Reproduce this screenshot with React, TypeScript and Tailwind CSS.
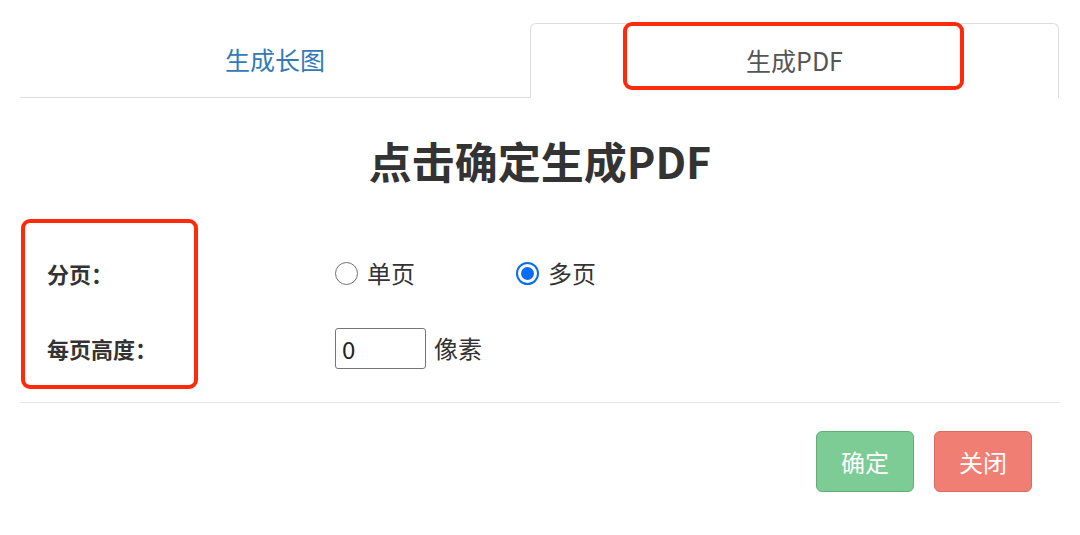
import React from 'react';

const font = "font-['Noto_Sans_CJK_SC','Noto_Sans',sans-serif]";

const Radio = ({ checked, label }: { checked?: boolean; label: string }) => (
  <label className="flex items-center gap-[9px] text-[24px] text-[#333]">
    {checked ? (
      <span className="w-[23px] h-[23px] rounded-full border-[2px] border-[#0a6cf5] flex items-center justify-center">
        <span className="w-[13px] h-[13px] rounded-full bg-[#0a6cf5]" />
      </span>
    ) : (
      <span className="w-[23px] h-[23px] rounded-full border-[1.5px] border-[#6f6f6f] bg-white" />
    )}
    {label}
  </label>
);

const App = () => {
  return (
    <div className={`relative w-[1080px] h-[535px] bg-white overflow-hidden ${font}`}>
      {/* tabs */}
      <div className="mx-5 mt-[23px] flex h-[75px]">
        <div className="w-[510px] border-b border-[#ddd] flex items-center justify-center text-[25px] text-[#337ab7]">
          生成长图
        </div>
        <div className="flex-1 mr-[1px] border border-b-0 border-[#ddd] rounded-t-[6px] flex items-center justify-center text-[25px] text-[#555]">
          生成PDF
        </div>
      </div>

      <h1 className="mt-[32px] text-center text-[43px] leading-[60px] font-semibold text-[#333]">点击确定生成PDF</h1>

      {/* form */}
      <div className="mt-[60px] pl-[47px] flex flex-col gap-[29px]">
        <div className="flex items-center h-[46px]">
          <div className="w-[288px] text-[22px] font-bold text-[#333]">分页：</div>
          <div className="flex items-center gap-[36px]">
            <div className="w-[145px]">
              <Radio label="单页" />
            </div>
            <Radio checked label="多页" />
          </div>
        </div>
        <div className="flex items-center h-[46px]">
          <div className="w-[288px] text-[22px] font-bold text-[#333]">每页高度：</div>
          <div className="flex items-center gap-[8px]">
            <input
              type="text"
              defaultValue="0"
              className="w-[91px] h-[41px] border border-[#767676] rounded-[3px] px-[6px] text-[24px] text-[#222] outline-none"
            />
            <span className="text-[24px] text-[#333]">像素</span>
          </div>
        </div>
      </div>

      <div className="mx-5 mt-[31px] border-t border-[#e5e5e5]" />

      <div className="mt-[28px] flex justify-end gap-5 pr-[48px]">
        <button className="w-[98px] h-[61px] rounded-[6px] bg-[#7dcb95] border border-[#5fae78] text-white text-[24px]">
          确定
        </button>
        <button className="w-[98px] h-[61px] rounded-[6px] bg-[#f07e72] border border-[#dc6a5e] text-white text-[24px]">
          关闭
        </button>
      </div>

      {/* annotation boxes */}
      <div className="absolute left-[623px] top-[22px] w-[341px] h-[68px] border-[4px] border-[#ff2a0a] rounded-[9px]" />
      <div className="absolute left-[21px] top-[219px] w-[177px] h-[170px] border-[4px] border-[#ff2a0a] rounded-[9px]" />
    </div>
  );
};

export default App;
